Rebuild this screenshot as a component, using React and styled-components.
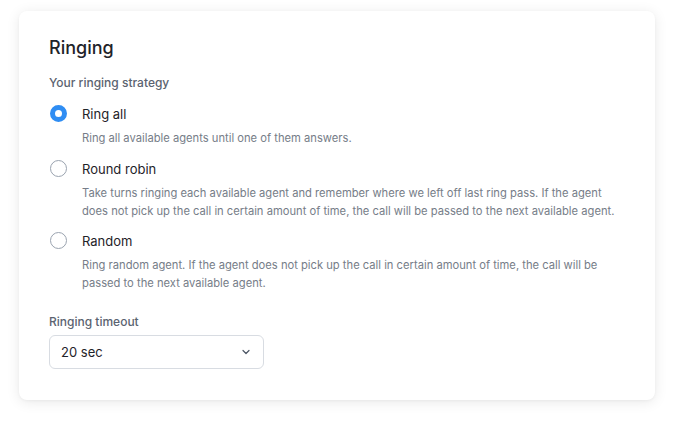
import React, { useState } from "react";
import styled, { createGlobalStyle } from "styled-components";

const GlobalStyle = createGlobalStyle`
  html, body {
    margin: 0;
    background: #ffffff;
    font-family: Inter, "Noto Sans", sans-serif;
  }
`;

const Page = styled.div`
  padding: 11px 19px 28px 19px;
`;

const Card = styled.div`
  width: 636px;
  height: 389px;
  box-sizing: border-box;
  background: #fff;
  border-radius: 8px;
  box-shadow: 0 2px 14px rgba(0, 0, 0, 0.09), 0 1px 3px rgba(0, 0, 0, 0.04);
  padding: 26px 30px 0 30px;
`;

const Title = styled.h2`
  margin: 0;
  font-weight: 500;
  font-size: 18px;
  line-height: 22px;
  color: #1f2329;
`;

const SectionLabel = styled.div`
  font-size: 12px;
  font-weight: 500;
  color: #5b6370;
  line-height: 16px;
  margin-top: ${(p) => p.$top || 0}px;
`;

const Options = styled.div`
  display: flex;
  flex-direction: column;
  gap: 12.5px;
  margin-top: 14px;
`;

const Option = styled.label`
  display: grid;
  grid-template-columns: 33px 1fr;
  cursor: pointer;
`;

const Radio = styled.span`
  width: 17px;
  height: 17px;
  box-sizing: border-box;
  border-radius: 50%;
  margin-left: 1px;
  border: ${(p) => (p.$on ? "5.5px solid #2f8df3" : "1.5px solid #9aa3af")};
  background: #fff;
`;

const OptionLabel = styled.div`
  font-size: 13px;
  color: #1f2329;
  line-height: 18px;
`;

const Desc = styled.div`
  grid-column: 2;
  font-size: 11.2px;
  color: #767d88;
  line-height: 18px;
  margin-top: 6px;
  padding-right: 2px;
`;

const Select = styled.div`
  width: 215px;
  height: 34px;
  box-sizing: border-box;
  margin-top: 5px;
  border: 1px solid #d8dce2;
  border-radius: 6px;
  display: flex;
  align-items: center;
  justify-content: space-between;
  padding: 0 11px;
  font-size: 13px;
  color: #1f2329;
`;

const options = [
  {
    id: "all",
    label: "Ring all",
    desc: "Ring all available agents until one of them answers.",
  },
  {
    id: "robin",
    label: "Round robin",
    desc:
      "Take turns ringing each available agent and remember where we left off last ring pass. If the agent does not pick up the call in certain amount of time, the call will be passed to the next available agent.",
  },
  {
    id: "random",
    label: "Random",
    desc:
      "Ring random agent. If the agent does not pick up the call in certain amount of time, the call will be passed to the next available agent.",
  },
];

export default function App() {
  const [strategy, setStrategy] = useState("all");
  return (
    <>
      <GlobalStyle />
      <Page>
        <Card>
          <Title>Ringing</Title>
          <SectionLabel $top={16}>Your ringing strategy</SectionLabel>
          <Options>
            {options.map((o) => (
              <Option key={o.id} onClick={() => setStrategy(o.id)}>
                <Radio $on={strategy === o.id} />
                <OptionLabel>{o.label}</OptionLabel>
                <Desc>{o.desc}</Desc>
              </Option>
            ))}
          </Options>
          <SectionLabel $top={22}>Ringing timeout</SectionLabel>
          <Select>
            <span>20 sec</span>
            <svg width="12" height="12" viewBox="0 0 24 24" fill="none" stroke="#4b5563" strokeWidth="2.4" strokeLinecap="round" strokeLinejoin="round">
              <path d="M6 9l6 6 6-6" />
            </svg>
          </Select>
        </Card>
      </Page>
    </>
  );
}
